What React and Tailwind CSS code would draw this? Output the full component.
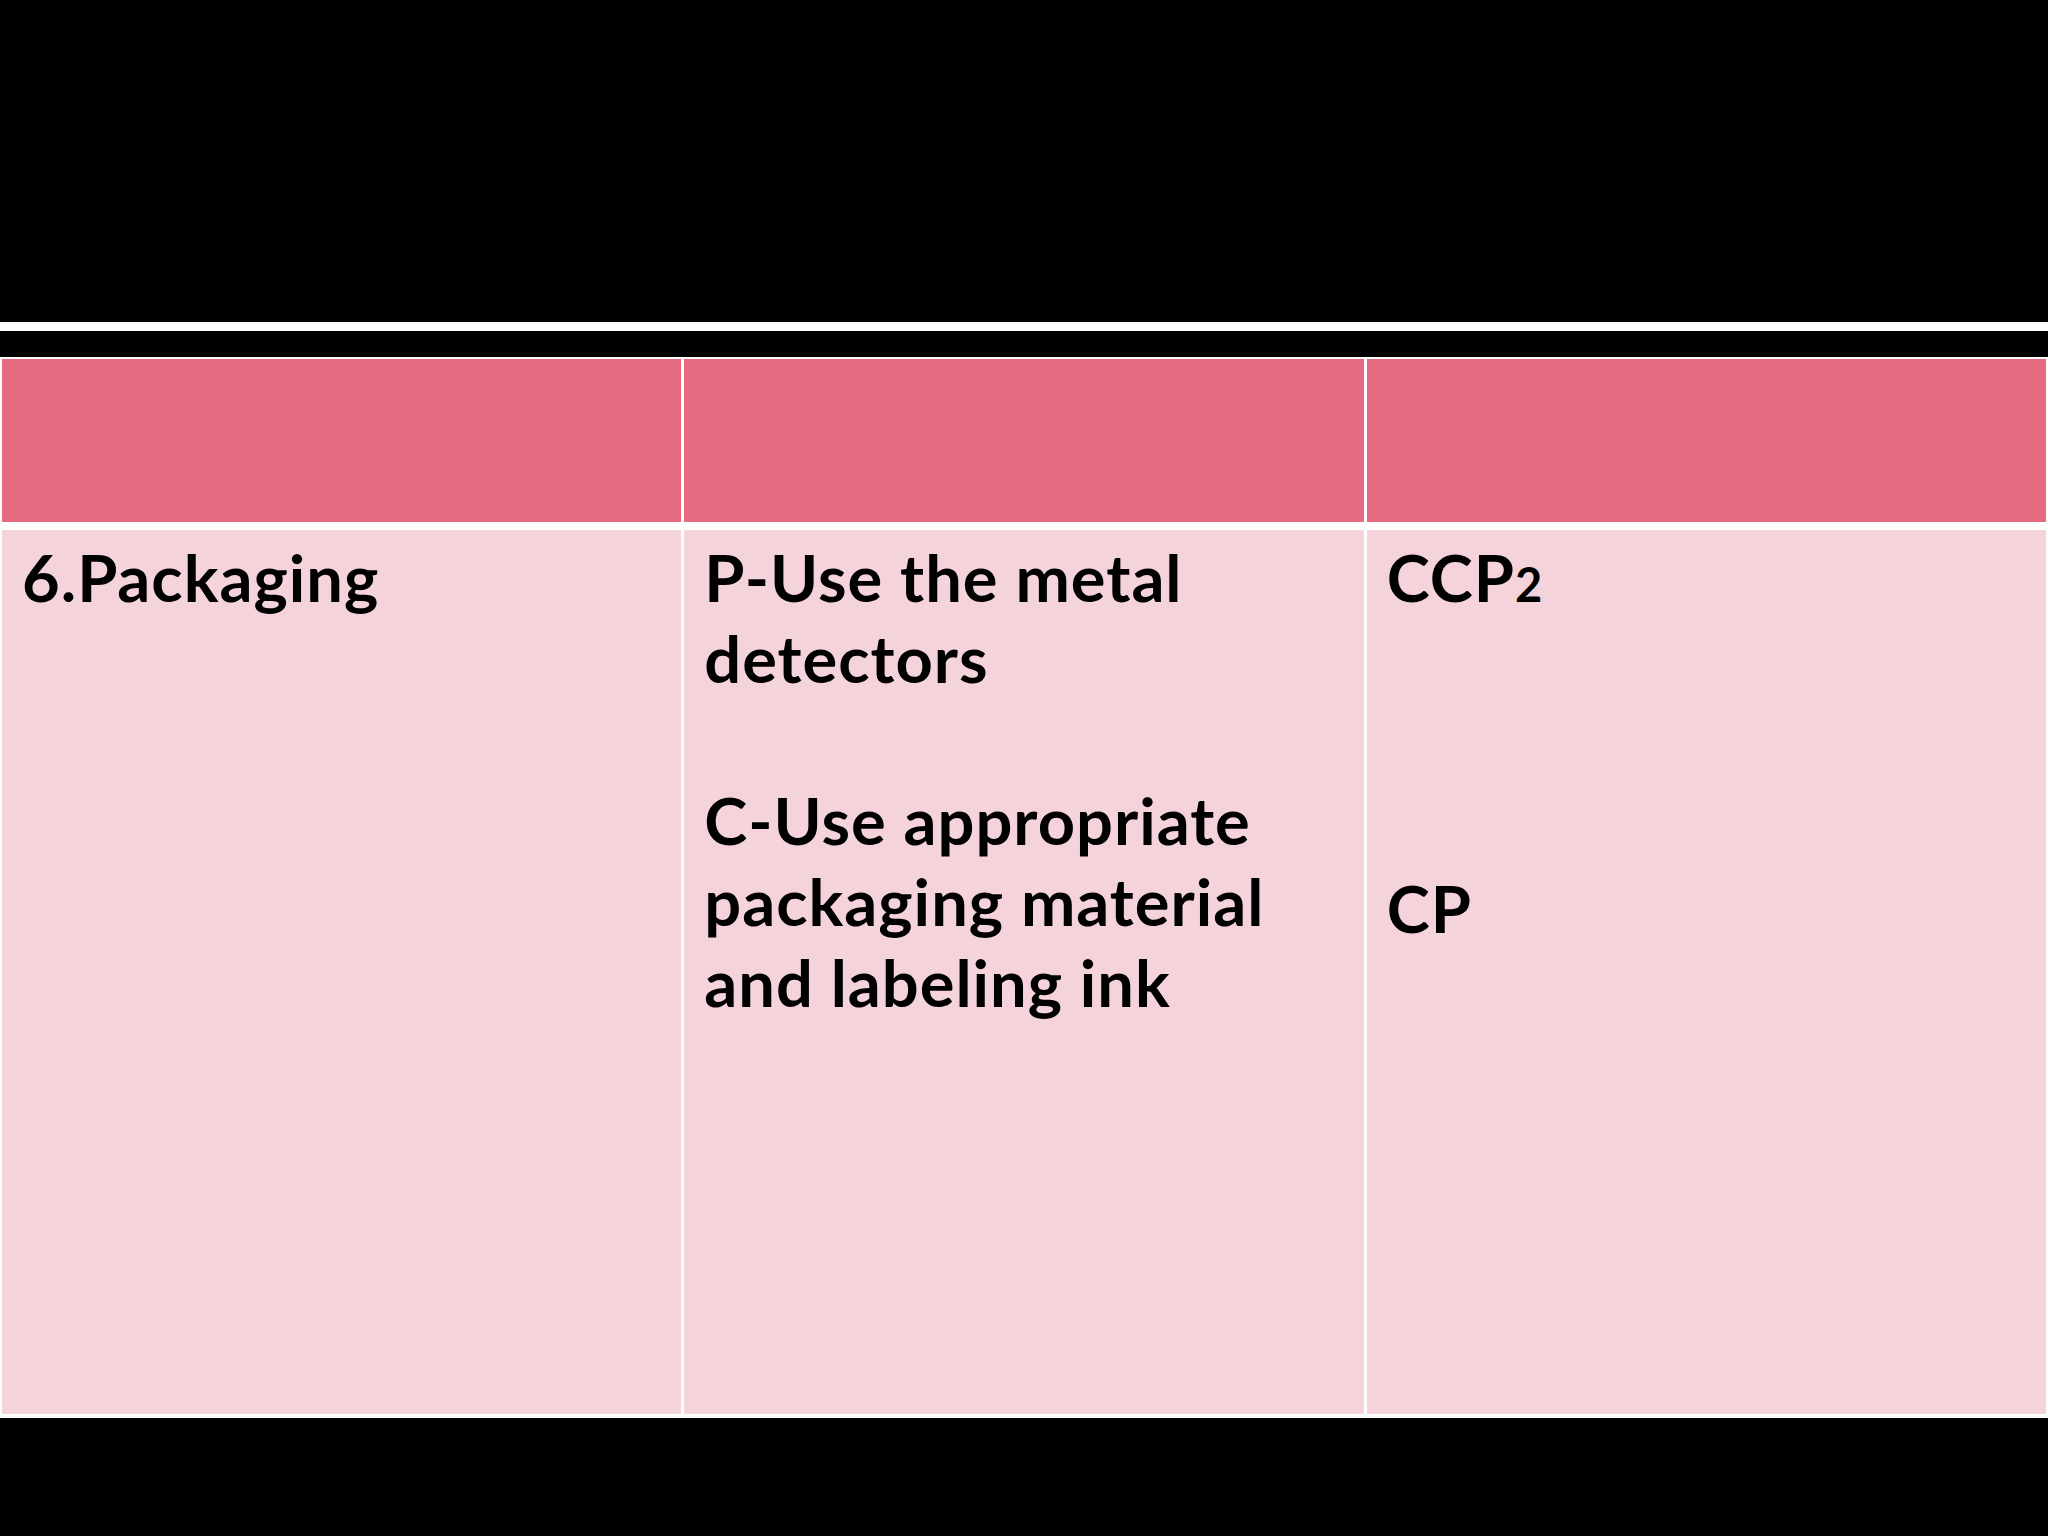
const font = { fontFamily: 'Lato, "Open Sans", sans-serif' }

function Cell({ children }) {
  return (
    <div className="bg-[#f5d3da] pl-[20px] pt-[7px] text-[65px] font-bold leading-[81px] tracking-[1px] text-black">
      {children}
    </div>
  )
}

export default function App() {
  return (
    <div className="flex h-[1536px] w-[2048px] flex-col bg-black" style={font}>
      <div className="h-[322px]" />
      <div className="h-[9px] bg-white" />
      <div className="h-[26px]" />

      <div className="flex flex-col gap-[8px] bg-white px-[2px] pt-[2px] pb-[4px]">
        <div className="grid h-[163px] grid-cols-3 gap-x-[3px]">
          <div className="bg-[#e56c80]" />
          <div className="bg-[#e56c80]" />
          <div className="bg-[#e56c80]" />
        </div>
        <div className="grid h-[884px] grid-cols-3 gap-x-[3px]">
          <Cell>6.Packaging</Cell>
          <Cell>
            <div>P-Use the metal</div>
            <div>detectors</div>
            <div>&nbsp;</div>
            <div>C-Use appropriate</div>
            <div>packaging material</div>
            <div>and labeling ink</div>
          </Cell>
          <Cell>
            <div>
              CCP<span className="text-[47px]">2</span>
            </div>
            <div>&nbsp;</div>
            <div>&nbsp;</div>
            <div>&nbsp;</div>
            <div>CP</div>
          </Cell>
        </div>
      </div>

      <div className="flex-1" />
    </div>
  )
}
